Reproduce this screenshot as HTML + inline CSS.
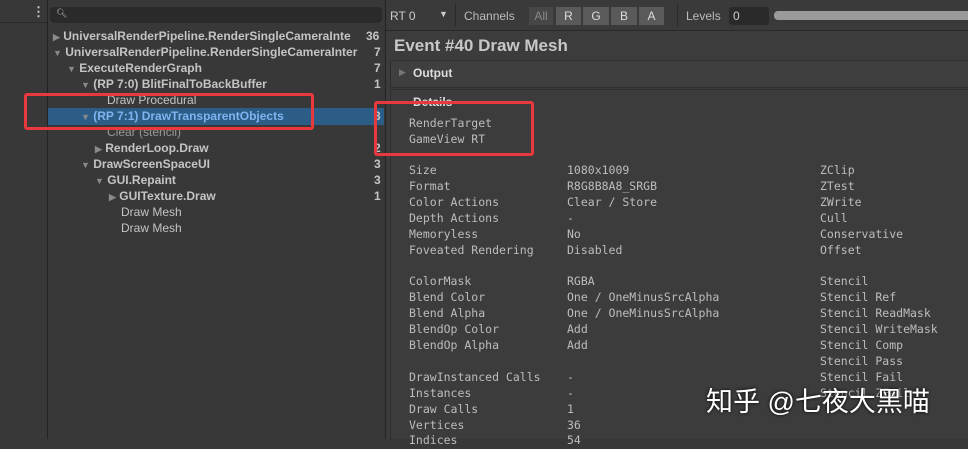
<!DOCTYPE html><html><head><style>
body{margin:0;width:968px;height:439px;overflow:hidden;background:#383838;font-family:"Liberation Sans",sans-serif;position:relative}
.a{position:absolute}
.tr{font-size:12px;font-weight:bold;color:#c4c4c4;white-space:nowrap;height:16px;line-height:16px}
.m{font-family:"DejaVu Sans Mono","Liberation Mono",monospace;font-size:11.5px;color:#bdbdbd;white-space:pre;line-height:15.9px}
.tri{color:#8a8a8a;font-size:9px}
.btn{background:#5a5a5a;color:#ddd;font-size:12px;text-align:center;line-height:18px;height:18px;top:7px}
</style></head><body>
<div class="a" style="left:0;top:0;width:47px;height:439px;background:#383838;border-right:1px solid #232323"></div>
<div class="a" style="left:0;top:0;width:47px;height:22px;border-bottom:1px solid #2a2a2a"></div>
<div class="a" style="left:32px;top:4px;color:#ccc;font-size:13px;font-weight:bold">⋮</div>
<div class="a" style="left:48px;top:0;width:337px;height:439px;background:#383838;border-right:1px solid #232323"></div>
<div class="a" style="left:50px;top:7px;width:332px;height:16px;background:#2a2a2a;border-radius:4px"></div>
<div class="a" style="left:56px;top:8px;color:#bbb;font-size:9px">🔍︎</div>
<div class="a" style="left:48px;top:108px;width:336px;height:17px;background:#2c5d87"></div>
<div class="a tr" style="left:53px;top:28px"><span class="tri">▶</span> UniversalRenderPipeline.RenderSingleCameraInte</div>
<div class="a tr" style="left:53px;top:44px"><span class="tri">▼</span> UniversalRenderPipeline.RenderSingleCameraInter</div>
<div class="a tr" style="left:67px;top:60px"><span class="tri">▼</span> ExecuteRenderGraph</div>
<div class="a tr" style="left:81px;top:76px"><span class="tri">▼</span> (RP 7:0) BlitFinalToBackBuffer</div>
<div class="a tr" style="left:107px;top:92px;font-weight:normal">Draw Procedural</div>
<div class="a tr" style="left:81px;top:108px;color:#7fb4f0"><span class="tri">▼</span> (RP 7:1) DrawTransparentObjects</div>
<div class="a tr" style="left:107px;top:124px;font-weight:normal;color:#999">Clear (stencil)</div>
<div class="a tr" style="left:95px;top:140px"><span class="tri">▶</span> RenderLoop.Draw</div>
<div class="a tr" style="left:81px;top:156px"><span class="tri">▼</span> DrawScreenSpaceUI</div>
<div class="a tr" style="left:95px;top:172px"><span class="tri">▼</span> GUI.Repaint</div>
<div class="a tr" style="left:109px;top:188px"><span class="tri">▶</span> GUITexture.Draw</div>
<div class="a tr" style="left:121px;top:204px;font-weight:normal">Draw Mesh</div>
<div class="a tr" style="left:121px;top:220px;font-weight:normal">Draw Mesh</div>
<div class="a tr" style="left:366px;top:28px">36</div>
<div class="a tr" style="left:374px;top:44px">7</div>
<div class="a tr" style="left:374px;top:60px">7</div>
<div class="a tr" style="left:374px;top:76px">1</div>
<div class="a tr" style="left:374px;top:108px">3</div>
<div class="a tr" style="left:374px;top:140px">2</div>
<div class="a tr" style="left:374px;top:156px">3</div>
<div class="a tr" style="left:374px;top:172px">3</div>
<div class="a tr" style="left:374px;top:188px">1</div>
<!-- right -->
<div class="a" style="left:386px;top:0;width:582px;height:439px;background:#3c3c3c"></div>
<div class="a" style="left:386px;top:0;width:582px;height:30px;background:#3a3a3a;border-bottom:1px solid #2a2a2a"></div>
<div class="a" style="left:390px;top:9px;color:#ccc;font-size:12px">RT 0</div>
<div class="a" style="left:439px;top:9px;color:#ccc;font-size:9px">▼</div>
<div class="a" style="left:455px;top:4px;width:1px;height:22px;background:#2a2a2a"></div>
<div class="a" style="left:464px;top:9px;color:#bbb;font-size:12px">Channels</div>
<div class="a btn" style="left:529px;width:24px;background:#474747;color:#888">All</div>
<div class="a btn" style="left:556px;width:25px">R</div>
<div class="a btn" style="left:583px;width:26px">G</div>
<div class="a btn" style="left:611px;width:26px">B</div>
<div class="a btn" style="left:639px;width:25px">A</div>
<div class="a" style="left:677px;top:4px;width:1px;height:22px;background:#2a2a2a"></div>
<div class="a" style="left:686px;top:9px;color:#bbb;font-size:12px">Levels</div>
<div class="a" style="left:729px;top:7px;width:40px;height:18px;background:#2a2a2a;border-radius:3px;color:#ccc;font-size:12px;line-height:18px;text-indent:4px">0</div>
<div class="a" style="left:774px;top:11px;width:194px;height:9px;background:#9a9a9a;border-radius:4px 0 0 4px"></div>
<div class="a" style="left:394px;top:36px;color:#c8c8c8;font-size:17px;font-weight:bold">Event #40 Draw Mesh</div>
<div class="a" style="left:390px;top:60px;width:578px;height:26px;background:#3f3f3f;border-top:1px solid #2e2e2e;border-bottom:1px solid #2e2e2e;border-left:1px solid #2e2e2e"></div>
<div class="a" style="left:399px;top:67px;color:#777;font-size:9px">▶</div>
<div class="a" style="left:413px;top:66px;color:#ddd;font-size:12px;font-weight:bold">Output</div>
<div class="a" style="left:390px;top:89px;width:578px;height:350px;border-top:1px solid #2e2e2e;border-left:1px solid #2e2e2e"></div>
<div class="a" style="left:413px;top:95px;color:#ddd;font-size:12px;font-weight:bold">Details</div>
<div class="a m" style="left:409px;top:116px">RenderTarget
GameView RT</div>
<div class="a m" style="left:409px;top:163px">Size
Format
Color Actions
Depth Actions
Memoryless
Foveated Rendering

ColorMask
Blend Color
Blend Alpha
BlendOp Color
BlendOp Alpha

DrawInstanced Calls
Instances
Draw Calls
Vertices
Indices</div>
<div class="a m" style="left:567px;top:163px">1080x1009
R8G8B8A8_SRGB
Clear / Store
-
No
Disabled

RGBA
One / OneMinusSrcAlpha
One / OneMinusSrcAlpha
Add
Add

-
-
1
36
54</div>
<div class="a m" style="left:820px;top:163px">ZClip
ZTest
ZWrite
Cull
Conservative
Offset

Stencil
Stencil Ref
Stencil ReadMask
Stencil WriteMask
Stencil Comp
Stencil Pass
Stencil Fail
Stencil ZFail</div>
<div class="a" style="left:706px;top:380px;color:#fff;font-size:27px;font-family:'Liberation Sans','Noto Sans CJK SC',sans-serif;text-shadow:0 0 3px #000">知乎 @七夜大黑喵</div>
<div class="a" style="left:24px;top:93px;width:290px;height:37px;border:3px solid #e8393e;border-radius:3px;box-sizing:border-box"></div>
<div class="a" style="left:374px;top:101px;width:160px;height:55px;border:3px solid #e8393e;border-radius:3px;box-sizing:border-box"></div>
</body></html>
